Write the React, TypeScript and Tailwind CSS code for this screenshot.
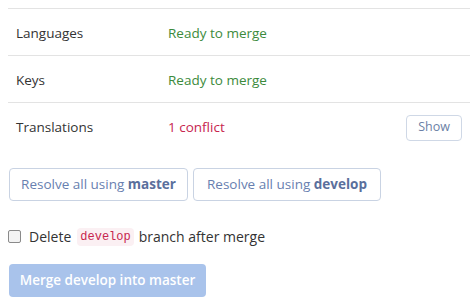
export default function App() {
  const rows = [
    { name: 'Languages', status: 'Ready to merge', ok: true },
    { name: 'Keys', status: 'Ready to merge', ok: true },
    { name: 'Translations', status: '1 conflict', ok: false },
  ];

  return (
    <div className="h-[300px] w-[474px] overflow-hidden bg-white px-2 pt-2 font-['Open_Sans',sans-serif] text-[13.5px] text-[#333]">
      <div className="w-[462px]">
        {rows.map((row) => (
          <div key={row.name} className="flex h-[47px] items-center border-t border-[#e3e3e3] pl-2 pr-2 pt-[3px]">
            <div className="w-[152px]">{row.name}</div>
            <div className={row.ok ? 'flex-1 text-[#3c8a3c]' : 'flex-1 text-[#c7254e]'}>{row.status}</div>
            {!row.ok && (
              <button className="h-[26px] w-[56px] rounded border border-[#cfd8e6] bg-white text-[12.5px] text-[#6b7fa6]">
                Show
              </button>
            )}
          </div>
        ))}
      </div>

      <div className="mt-[19px] flex gap-[5px] pl-px">
        <button className="h-[33px] w-[179px] rounded border border-[#c9d3e3] bg-white text-[13.5px] text-[#6880b0]">
          Resolve all using <span className="font-bold text-[#5a6f9c]">master</span>
        </button>
        <button className="h-[33px] w-[188px] rounded border border-[#c9d3e3] bg-white text-[13.5px] text-[#6880b0]">
          Resolve all using <span className="font-bold text-[#5a6f9c]">develop</span>
        </button>
      </div>

      <label className="mt-[25px] flex items-center text-[14px]">
        <span className="h-[13px] w-[13px] rounded-[2px] border border-[#8a8a8a] bg-[#f3f3f3]" />
        <span className="ml-[8px]">Delete</span>
        <code className="ml-[6px] rounded bg-[#fbf0f3] px-[3px] font-['Liberation_Mono',monospace] text-[12px] text-[#c7254e]">
          develop
        </code>
        <span className="ml-[5px]">branch after merge</span>
      </label>

      <button className="mt-[17px] ml-px h-[33px] w-[197px] rounded bg-[#a9c3eb] text-[13.5px] font-semibold text-white">
        Merge develop into master
      </button>
    </div>
  );
}
